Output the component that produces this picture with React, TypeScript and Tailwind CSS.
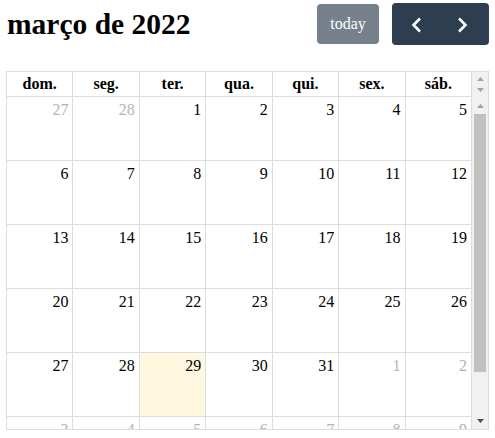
import React from 'react';

type Day = { n: number; other?: boolean; today?: boolean };

const weekdays = ['dom.', 'seg.', 'ter.', 'qua.', 'qui.', 'sex.', 'sáb.'];

function buildWeeks(): Day[][] {
  const days: Day[] = [{ n: 27, other: true }, { n: 28, other: true }];
  for (let i = 1; i <= 31; i++) days.push({ n: i, today: i === 29 });
  for (let i = 1; i <= 9; i++) days.push({ n: i, other: true });
  const weeks: Day[][] = [];
  for (let i = 0; i < days.length; i += 7) weeks.push(days.slice(i, i + 7));
  return weeks;
}

function Triangle({ dir, color }: { dir: 'up' | 'down'; color: string }) {
  return (
    <svg width="7" height="4" viewBox="0 0 7 4" className="block">
      {dir === 'up' ? (
        <polygon points="0,4 3.5,0 7,4" fill={color} />
      ) : (
        <polygon points="0,0 7,0 3.5,4" fill={color} />
      )}
    </svg>
  );
}

function Chevron({ dir }: { dir: 'left' | 'right' }) {
  return (
    <svg width="11" height="16" viewBox="0 0 11 16" className="block">
      <polyline
        points={dir === 'left' ? '9,1.5 2.5,8 9,14.5' : '2,1.5 8.5,8 2,14.5'}
        fill="none"
        stroke="white"
        strokeWidth="2.6"
        strokeLinejoin="miter"
      />
    </svg>
  );
}

export default function App() {
  const weeks = buildWeeks();

  return (
    <div className="h-[438px] w-[495px] overflow-hidden bg-white px-[6px] font-['Liberation_Serif',serif] text-black">
      <div className="flex h-[71px] items-start justify-between">
        <h2 className="ml-[1px] mt-[7px] text-[29.5px] font-bold leading-[34px]">março de 2022</h2>
        <div className="mt-[3px] flex items-start">
          <button
            type="button"
            className="mt-[1px] h-[40px] w-[62px] rounded-[4px] bg-[#76818d] text-[16px] leading-[40px] text-white"
          >
            today
          </button>
          <div className="ml-[13px] flex h-[42px] w-[97px] rounded-[4px] bg-[#2c3e50]">
            <button type="button" className="flex w-[48.5px] items-center justify-center pt-[2px]">
              <Chevron dir="left" />
            </button>
            <button type="button" className="flex w-[48.5px] items-center justify-center pr-[5px] pt-[2px]">
              <Chevron dir="right" />
            </button>
          </div>
        </div>
      </div>

      <div className="border border-[#dddddd]">
        <div className="flex h-[25px]">
          <div className="grid w-[466px] grid-cols-7">
            {weekdays.map((d) => (
              <div
                key={d}
                className="border-b border-r border-[#dddddd] text-center text-[16px] font-bold leading-[24px]"
              >
                {d}
              </div>
            ))}
          </div>
          <div className="flex w-[16px] flex-col items-center bg-[#f1f1f1] pt-[5px]">
            <Triangle dir="up" color="#a3a3a3" />
            <div className="h-[7px]" />
            <Triangle dir="down" color="#a3a3a3" />
          </div>
        </div>

        <div className="flex h-[332px] overflow-hidden">
          <div className="w-[466px]">
            {weeks.map((week, wi) => (
              <div key={wi} className="grid h-[64px] grid-cols-7">
                {week.map((day, di) => (
                  <div
                    key={di}
                    className={`border-b border-r border-[#dddddd] pr-[4px] pt-[4px] text-right text-[16px] leading-[18px] ${
                      day.today ? 'bg-[#fef8e0]' : ''
                    } ${day.other ? 'text-[#b3b3b3]' : 'text-black'}`}
                  >
                    {day.n}
                  </div>
                ))}
              </div>
            ))}
          </div>
          <div className="flex w-[16px] flex-col items-center bg-[#f1f1f1]">
            <div className="flex h-[17px] items-center justify-center">
              <Triangle dir="up" color="#a3a3a3" />
            </div>
            <div className="h-[258px] w-[12px] bg-[#c1c1c1]" />
            <div className="flex-1" />
            <div className="flex h-[17px] items-center justify-center">
              <Triangle dir="down" color="#505050" />
            </div>
          </div>
        </div>
      </div>
    </div>
  );
}
